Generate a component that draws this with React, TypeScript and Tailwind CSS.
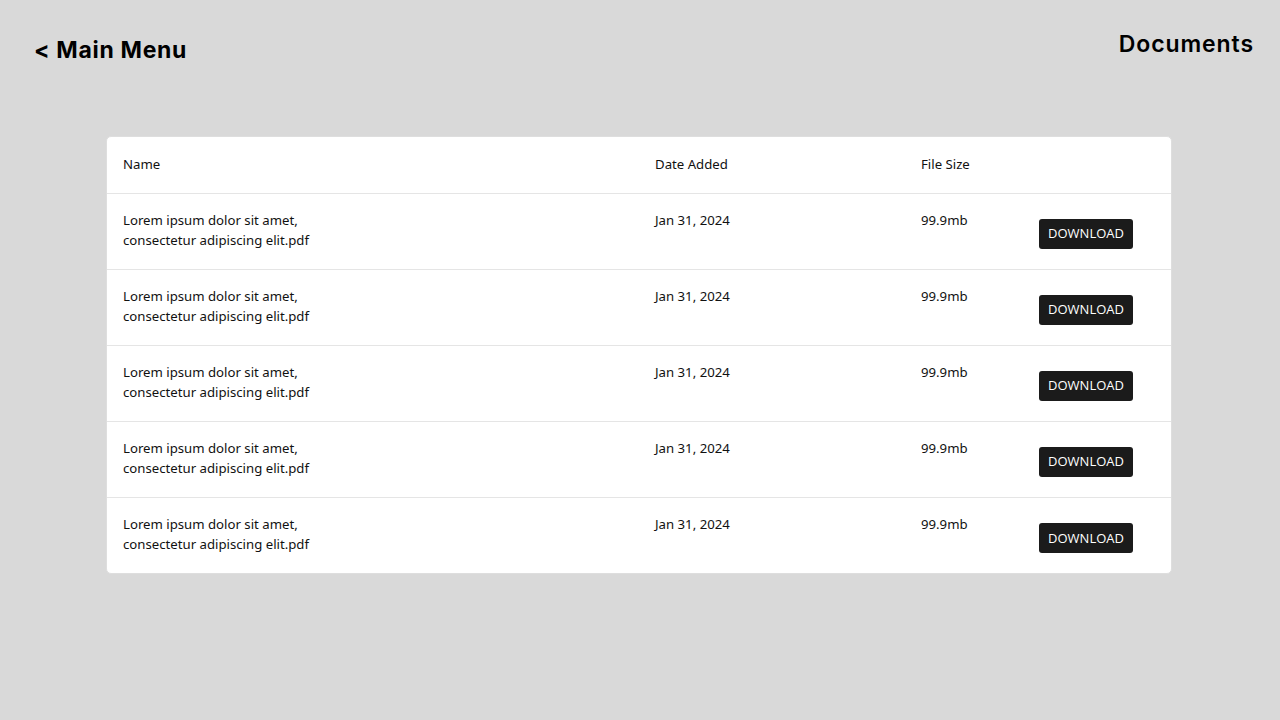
import React from "react"

const rows = Array.from({ length: 5 }, () => ({
  name: ["Lorem ipsum dolor sit amet,", "consectetur adipiscing elit.pdf"],
  date: "Jan 31, 2024",
  size: "99.9mb",
}))

export default function App() {
  return (
    <div className="min-h-screen w-full bg-[#d9d9d9]" style={{ fontFamily: "'Noto Sans', sans-serif" }}>
      <header className="flex items-start justify-between pl-[34px] pr-[26px] pt-[33px]">
        <button className="mt-[6px] flex items-center text-[23px] font-bold tracking-[0.03em] text-black leading-none font-['Inter',sans-serif]">
          <span className="mr-[6px]">&lt;</span>Main Menu
        </button>
        <h1 className="text-[23px] font-semibold tracking-[0.04em] text-black leading-none font-['Inter',sans-serif]">Documents</h1>
      </header>

      <main className="pt-[74px] pl-[106px] pr-[108px]">
        <div className="rounded-[5px] border border-[#dedede] bg-white overflow-hidden">
          <table className="w-full text-left text-[13.2px] text-[#111] border-collapse">
            <thead>
              <tr className="h-[56px]">
                <th className="w-[532px] pl-4 font-normal">Name</th>
                <th className="w-[266px] pl-4 font-normal">Date Added</th>
                <th className="w-[117px] pl-4 font-normal">File Size</th>
                <th></th>
              </tr>
            </thead>
            <tbody>
              {rows.map((r, i) => (
                <tr key={i} className="h-[76px] border-t border-[#e5e5e5]">
                  <td className="pl-4 pt-[16px] align-top leading-[20px]">
                    {r.name[0]}
                    <br />
                    {r.name[1]}
                  </td>
                  <td className="pl-4 pt-[16px] align-top leading-[20px]">{r.date}</td>
                  <td className="pl-4 pt-[16px] align-top leading-[20px]">{r.size}</td>
                  <td className="pl-[17px] pt-[6px] align-middle">
                    <button className="h-[30px] w-[94px] rounded-[3px] bg-[#1b1b1b] text-[13px] text-white font-['Open_Sans',sans-serif]">
                      DOWNLOAD
                    </button>
                  </td>
                </tr>
              ))}
            </tbody>
          </table>
        </div>
      </main>
    </div>
  )
}
